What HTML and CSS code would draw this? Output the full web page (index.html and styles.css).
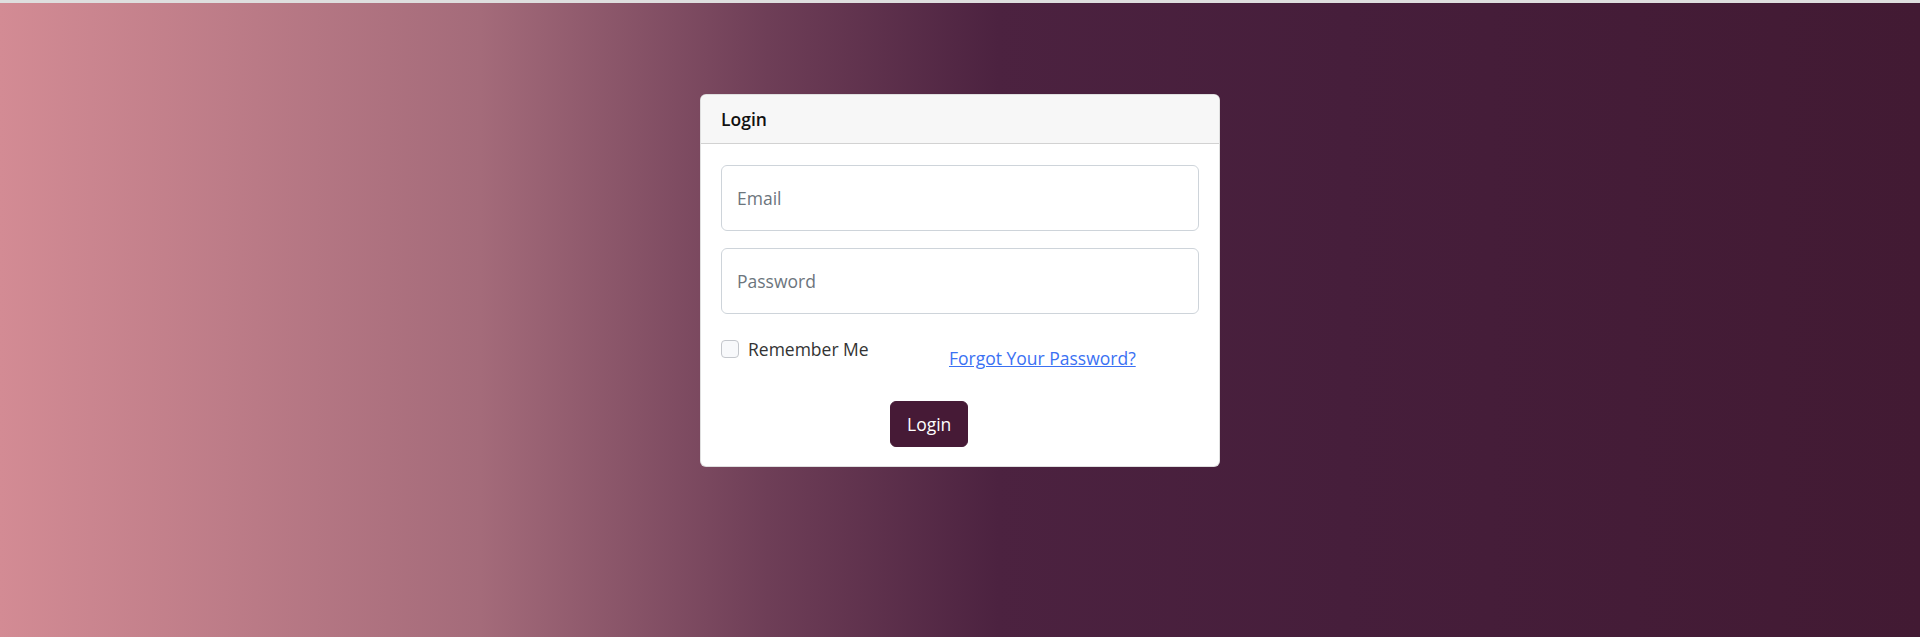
FILE: index.html
```html
<!DOCTYPE html>
<html lang="en">
<head>
  <meta charset="UTF-8">
  <meta name="viewport" content="width=device-width, initial-scale=1.0">
  <title>Login</title>
  <link rel="stylesheet" href="styles.css">
</head>
<body>
  <div class="top-strip"></div>

  <main class="page">
    <div class="card">
      <div class="card-header">Login</div>
      <div class="card-body">
        <form class="login-form" onsubmit="event.preventDefault()">
          <div class="form-group">
            <input type="email" class="form-control" placeholder="Email">
          </div>
          <div class="form-group">
            <input type="password" class="form-control" placeholder="Password">
          </div>

          <div class="options-row">
            <label class="remember">
              <input type="checkbox" class="check">
              <span>Remember Me</span>
            </label>
            <div class="forgot">
              <a href="#">Forgot Your Password?</a>
            </div>
          </div>

          <div class="actions">
            <button type="submit" class="btn-login">Login</button>
          </div>
        </form>
      </div>
    </div>
  </main>
</body>
</html>
```

FILE: styles.css
```css
/* Estilos generales */
:root {
  --primary-color: #461a36;
  --link-color: #3b71f3;
  --text-color: #212529;
  --border-color: #ced4da;
}

html, body {
  height: 100%;
}

body {
  font-family: 'Open Sans', 'Noto Sans', sans-serif;
  font-size: 17.5px;
  line-height: 28px;
  margin: 0;
  color: var(--text-color);
  background: linear-gradient(to right, #d38b94 0%, #a46b7a 25%, #6e3e57 40%, #4c2240 52%, #461e3b 70%, #421a33 100%);
}

.top-strip {
  height: 3px;
  background-color: #dedede;
}

.page {
  display: flex;
  justify-content: center;
  padding-top: 91px;
}

/* Tarjeta */
.card {
  width: 520px;
  box-sizing: border-box;
  background-color: #fff;
  border: 1px solid rgba(0, 0, 0, 0.125);
  border-radius: 6px;
  overflow: hidden;
}

.card-header {
  background-color: #f7f7f7;
  border-bottom: 1px solid rgba(0, 0, 0, 0.15);
  padding: 10px 20px;
  font-weight: 600;
  color: #111;
}

.card-body {
  padding: 21px 20px 19px;
}

/* Formulario */
.form-group {
  margin-bottom: 17px;
}

.form-control {
  display: block;
  width: 100%;
  height: 66px;
  box-sizing: border-box;
  padding: 0 15px;
  font-family: inherit;
  font-size: 17.5px;
  color: #495057;
  border: 1px solid var(--border-color);
  border-radius: 6px;
  outline: none;
}

.form-control::placeholder {
  color: #6c757d;
}

.options-row {
  display: flex;
  align-items: flex-start;
  margin-top: 21px;
}

.remember {
  width: 228px;
  display: flex;
  align-items: center;
  gap: 9px;
  color: #333;
}

.check {
  appearance: none;
  margin: 0;
  width: 18px;
  height: 18px;
  border: 1px solid #c4c7cc;
  border-radius: 4px;
  background-color: #f8f9fb;
}

.forgot {
  padding-top: 9px;
}

.forgot a {
  color: var(--link-color);
  text-decoration: underline;
}

.actions {
  margin-top: 29px;
  padding-left: 169px;
}

.btn-login {
  font-family: inherit;
  font-size: 17.5px;
  line-height: 28px;
  padding: 8px 16px;
  color: #fff;
  background-color: var(--primary-color);
  border: 1px solid var(--primary-color);
  border-radius: 6px;
  cursor: pointer;
}
```
